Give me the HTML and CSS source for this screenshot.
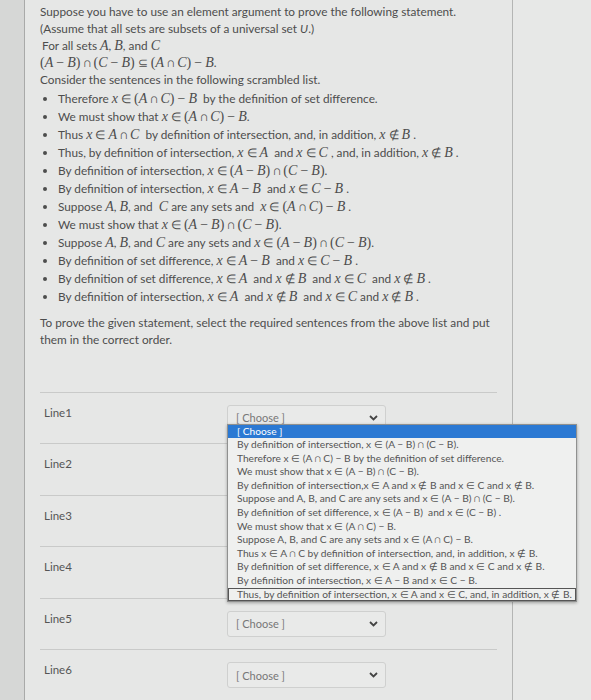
FILE: index.html
```html
<!DOCTYPE html>
<html>
<head>
<meta charset="utf-8">
<link rel="stylesheet" href="styles.css">
</head>
<body>
<div class="page">
  <div class="gutter"></div>
  <div class="main">
    <div class="question">
      <p class="line">Suppose you have to use an element argument to prove the following statement.</p>
      <p class="line">(Assume that all sets are subsets of a universal set <i>U</i>.)</p>
      <p class="line indent">For all sets <span class="m">A</span>, <span class="m">B</span>, and <span class="m">C</span></p>
      <p class="line formula"><span class="mr">(</span><span class="m">A</span> <span class="mr">−</span> <span class="m">B</span><span class="mr">)</span> ∩ <span class="mr">(</span><span class="m">C</span> <span class="mr">−</span> <span class="m">B</span><span class="mr">)</span> ⊆ <span class="mr">(</span><span class="m">A</span> ∩ <span class="m">C</span><span class="mr">)</span> <span class="mr">−</span> <span class="m">B</span>.</p>
      <p class="line">Consider the sentences in the following scrambled list.</p>
      <ul class="bullets">
        <li>Therefore <span class="m">x</span> ∈ <span class="mr">(</span><span class="m">A</span> ∩ <span class="m">C</span><span class="mr">)</span> <span class="mr">−</span> <span class="m">B</span> &nbsp;by the definition of set difference.</li>
        <li>We must show that <span class="m">x</span> ∈ <span class="mr">(</span><span class="m">A</span> ∩ <span class="m">C</span><span class="mr">)</span> <span class="mr">−</span> <span class="m">B</span>.</li>
        <li>Thus <span class="m">x</span> ∈ <span class="m">A</span> ∩ <span class="m">C</span> &nbsp;by definition of intersection, and, in addition, <span class="m">x</span> ∉ <span class="m">B</span> .</li>
        <li>Thus, by definition of intersection, <span class="m">x</span> ∈ <span class="m">A</span> &nbsp;and <span class="m">x</span> ∈ <span class="m">C</span> , and, in addition, <span class="m">x</span> ∉ <span class="m">B</span> .</li>
        <li>By definition of intersection, <span class="m">x</span> ∈ <span class="mr">(</span><span class="m">A</span> <span class="mr">−</span> <span class="m">B</span><span class="mr">)</span> ∩ <span class="mr">(</span><span class="m">C</span> <span class="mr">−</span> <span class="m">B</span><span class="mr">)</span>.</li>
        <li>By definition of intersection, <span class="m">x</span> ∈ <span class="m">A</span> <span class="mr">−</span> <span class="m">B</span> &nbsp;and <span class="m">x</span> ∈ <span class="m">C</span> <span class="mr">−</span> <span class="m">B</span> .</li>
        <li>Suppose <span class="m">A</span>, <span class="m">B</span>, and &nbsp;<span class="m">C</span> are any sets and &nbsp;<span class="m">x</span> ∈ <span class="mr">(</span><span class="m">A</span> ∩ <span class="m">C</span><span class="mr">)</span> <span class="mr">−</span> <span class="m">B</span> .</li>
        <li>We must show that <span class="m">x</span> ∈ <span class="mr">(</span><span class="m">A</span> <span class="mr">−</span> <span class="m">B</span><span class="mr">)</span> ∩ <span class="mr">(</span><span class="m">C</span> <span class="mr">−</span> <span class="m">B</span><span class="mr">)</span>.</li>
        <li>Suppose <span class="m">A</span>, <span class="m">B</span>, and <span class="m">C</span> are any sets and <span class="m">x</span> ∈ <span class="mr">(</span><span class="m">A</span> <span class="mr">−</span> <span class="m">B</span><span class="mr">)</span> ∩ <span class="mr">(</span><span class="m">C</span> <span class="mr">−</span> <span class="m">B</span><span class="mr">)</span>.</li>
        <li>By definition of set difference, <span class="m">x</span> ∈ <span class="m">A</span> <span class="mr">−</span> <span class="m">B</span> &nbsp;and <span class="m">x</span> ∈ <span class="m">C</span> <span class="mr">−</span> <span class="m">B</span> .</li>
        <li>By definition of set difference, <span class="m">x</span> ∈ <span class="m">A</span> &nbsp;and <span class="m">x</span> ∉ <span class="m">B</span> &nbsp;and <span class="m">x</span> ∈ <span class="m">C</span> &nbsp;and <span class="m">x</span> ∉ <span class="m">B</span> .</li>
        <li>By definition of intersection, <span class="m">x</span> ∈ <span class="m">A</span> &nbsp;and <span class="m">x</span> ∉ <span class="m">B</span> &nbsp;and <span class="m">x</span> ∈ <span class="m">C</span> and <span class="m">x</span> ∉ <span class="m">B</span> .</li>
      </ul>
      <p class="line prompt">To prove the given statement, select the required sentences from the above list and put them in the correct order.</p>
    </div>

    <div class="rows">
      <div class="row">
        <span class="label">Line1</span>
        <div class="select-wrap">
          <div class="select"><span>[ Choose ]</span><svg class="chev" width="9" height="6" viewBox="0 0 9 6"><polyline points="1,1 4.5,4.5 8,1" fill="none" stroke="#444" stroke-width="1.8"/></svg></div>
          <ul class="dropdown">
            <li class="hl">[ Choose ]</li>
            <li>By definition of intersection, x ∈ (A − B) ∩ (C − B).</li>
            <li>Therefore x ∈ (A ∩ C) − B by the definition of set difference.</li>
            <li>We must show that x ∈ (A − B) ∩ (C − B).</li>
            <li>By definition of intersection,x ∈ A and x ∉ B and x ∈ C and x ∉ B.</li>
            <li>Suppose and A, B, and C are any sets and x ∈ (A − B) ∩ (C − B).</li>
            <li>By definition of set difference, x ∈ (A − B) &nbsp;and x ∈ (C − B) .</li>
            <li>We must show that x ∈ (A ∩ C) − B.</li>
            <li>Suppose A, B, and C are any sets and x ∈ (A ∩ C) − B.</li>
            <li>Thus x ∈ A ∩ C by definition of intersection, and, in addition, x ∉ B.</li>
            <li>By definition of set difference, x ∈ A and x ∉ B and x ∈ C and x ∉ B.</li>
            <li>By definition of intersection, x ∈ A − B and x ∈ C − B.</li>
            <li class="focus">Thus, by definition of intersection, x ∈ A and x ∈ C, and, in addition, x ∉ B.</li>
          </ul>
        </div>
      </div>
      <div class="row">
        <span class="label">Line2</span>
        <div class="select-wrap"><div class="select"><span>[ Choose ]</span><svg class="chev" width="9" height="6" viewBox="0 0 9 6"><polyline points="1,1 4.5,4.5 8,1" fill="none" stroke="#444" stroke-width="1.8"/></svg></div></div>
      </div>
      <div class="row">
        <span class="label">Line3</span>
        <div class="select-wrap"><div class="select"><span>[ Choose ]</span><svg class="chev" width="9" height="6" viewBox="0 0 9 6"><polyline points="1,1 4.5,4.5 8,1" fill="none" stroke="#444" stroke-width="1.8"/></svg></div></div>
      </div>
      <div class="row">
        <span class="label">Line4</span>
        <div class="select-wrap"><div class="select"><span>[ Choose ]</span><svg class="chev" width="9" height="6" viewBox="0 0 9 6"><polyline points="1,1 4.5,4.5 8,1" fill="none" stroke="#444" stroke-width="1.8"/></svg></div></div>
      </div>
      <div class="row">
        <span class="label">Line5</span>
        <div class="select-wrap"><div class="select"><span>[ Choose ]</span><svg class="chev" width="9" height="6" viewBox="0 0 9 6"><polyline points="1,1 4.5,4.5 8,1" fill="none" stroke="#444" stroke-width="1.8"/></svg></div></div>
      </div>
      <div class="row">
        <span class="label">Line6</span>
        <div class="select-wrap"><div class="select"><span>[ Choose ]</span><svg class="chev" width="9" height="6" viewBox="0 0 9 6"><polyline points="1,1 4.5,4.5 8,1" fill="none" stroke="#444" stroke-width="1.8"/></svg></div></div>
      </div>
    </div>
  </div>
  <div class="side"></div>
</div>
</body>
</html>
```
FILE: styles.css
```css
* { box-sizing: border-box; }
html, body {
  margin: 0;
  padding: 0;
  width: 591px;
  height: 700px;
  overflow: hidden;
  background: #e6e7e6;
}
.page {
  display: flex;
  height: 700px;
  overflow: hidden;
  font-family: Lato, "Open Sans", sans-serif;
  color: #4d4d4d;
}
.gutter {
  width: 25px;
  flex: none;
  background: #d6d7d6;
  border-right: 1px solid #a9aaa9;
}
.main {
  width: 488px;
  flex: none;
  border-right: 1px solid #b4b5b4;
  padding: 3px 15px 0 15px;
}
.side {
  flex: 1;
  background: #e7e8e7;
}
.question {
  font-size: 11.8px;
  line-height: 17px;
}
.line {
  margin: 0;
}
.indent {
  padding-left: 2px;
}
.m {
  font-family: "Liberation Serif", "DejaVu Serif", serif;
  font-style: italic;
  font-size: 14px;
  line-height: 1;
}
.mr {
  font-family: "Liberation Serif", "DejaVu Serif", serif;
  font-size: 14px;
  line-height: 1;
}
.bullets {
  margin: 2px 0 0 0;
  padding: 0 0 0 18px;
  line-height: 18px;
}
.prompt {
  margin-top: 7.5px;
  line-height: 17px;
}
.rows {
  margin-top: 44px;
  width: 457px;
}
.row {
  display: flex;
  align-items: flex-start;
  border-top: 1px solid #c9cac9;
  height: 51.6px;
}
.label {
  width: 187px;
  flex: none;
  font-size: 11.5px;
  color: #555;
  padding: 13px 0 0 4px;
}
.select-wrap {
  position: relative;
  padding-top: 12px;
}
.select {
  width: 159px;
  height: 26px;
  border: 1px solid #cfd0cf;
  border-radius: 3px;
  background: #e9eae9;
  display: flex;
  align-items: center;
  justify-content: space-between;
  padding: 0 7px 0 8px;
  font-size: 11px;
  color: #777;
}
.dropdown {
  position: absolute;
  top: 31px;
  left: 0;
  width: 350px;
  margin: 0;
  padding: 0;
  list-style: none;
  background: #eff0ef;
  border: 1px solid #8f908f;
  box-shadow: 0 1px 3px rgba(0,0,0,0.3);
  font-size: 10.2px;
  line-height: 13.6px;
  color: #555;
  z-index: 5;
}
.dropdown li {
  padding: 0 0 0 9px;
  white-space: nowrap;
}
.dropdown li.hl {
  background: #2b79d3;
  color: #fff;
}
.dropdown li.focus {
  outline: 1px solid #555;
  outline-offset: -1px;
}
```
